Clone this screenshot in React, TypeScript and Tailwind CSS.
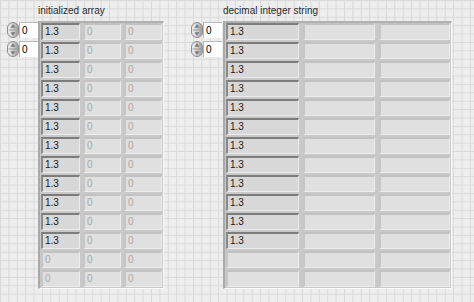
import React from 'react';

const ROWS = 14;
const FILLED = 12;

function Spinner() {
  return (
    <svg width="12" height="16" viewBox="0 0 12 16" className="shrink-0">
      <defs>
        <linearGradient id="spg" x1="0" y1="0" x2="1" y2="0">
          <stop offset="0" stopColor="#f4f4f4" />
          <stop offset="0.5" stopColor="#cfcfcf" />
          <stop offset="1" stopColor="#9a9a9a" />
        </linearGradient>
      </defs>
      <rect x="0.5" y="0.5" width="11" height="15" rx="5.5" fill="url(#spg)" stroke="#8c8c8c" />
      <line x1="1.5" y1="8" x2="10.5" y2="8" stroke="#9a9a9a" />
      <path d="M6 2.2 L8.5 5.8 L3.5 5.8 Z" fill="#7a7a7a" />
      <path d="M6 13.8 L8.5 10.2 L3.5 10.2 Z" fill="#7a7a7a" />
    </svg>
  );
}

function IndexControl({ boxW }: { boxW: string }) {
  return (
    <div className="flex items-center h-[16px]">
      <Spinner />
      <div className={`${boxW} h-[16px] bg-white border-t border-l border-[#b8b8b8] text-[10px] leading-[15px] pl-[2px] text-black`}>0</div>
    </div>
  );
}

function Cell({ active, text, w }: { active: boolean; text: string; w: string }) {
  return (
    <div
      className={
        active
          ? `${w} h-[17px] bg-[#d8d8d8] border-t-2 border-l-2 border-b border-r border-t-[#7c7c7c] border-l-[#8a8a8a] border-b-[#ececec] border-r-[#ececec] text-[10px] leading-[14px] pl-[2px] text-[#1a1a1a]`
          : `${w} h-[17px] bg-[#e0e0e0] border-t-2 border-l-2 border-b border-r border-t-[#c2c2c2] border-l-[#c6c6c6] border-b-[#ededed] border-r-[#ededed] text-[10px] leading-[14px] pl-[2px] text-[#a8a8a8]`
      }
    >
      {text}
    </div>
  );
}

function ArrayBlock({
  label,
  widths,
  numeric,
  idxW,
  boxW,
  gapX,
}: {
  label: string;
  widths: string[];
  numeric: boolean;
  idxW: string;
  boxW: string;
  gapX: string;
}) {
  return (
    <div className="flex flex-col">
      <div className="flex h-[20px] text-[10px] leading-[20px] text-[#2a2a2a] whitespace-nowrap">
        <div className={idxW} />
        <span>{label}</span>
      </div>
      <div className="flex">
        <div className={`${idxW} flex flex-col gap-[3px] pt-[1px]`}>
          <IndexControl boxW={boxW} />
          <IndexControl boxW={boxW} />
        </div>
        <div className="bg-[#c9c9c9] border-l-2 border-t-2 border-r border-b border-l-[#a9a9a9] border-t-[#b0b0b0] border-r-[#fafafa] border-b-[#fafafa] pl-[1px] pr-[1px] pb-[1px]">
          <div className="flex flex-col gap-[2px]">
            {Array.from({ length: ROWS }).map((_, r) => (
              <div key={r} className={`flex ${gapX}`}>
                {widths.map((w, c) => {
                  const active = c === 0 && r < FILLED;
                  const text = active ? '1.3' : numeric ? '0' : '';
                  return <Cell key={c} active={active} text={text} w={w} />;
                })}
              </div>
            ))}
          </div>
        </div>
      </div>
    </div>
  );
}

export default function App() {
  return (
    <div
      className="w-[474px] h-[302px] overflow-hidden bg-[#eeeeee] bg-[linear-gradient(to_right,#d9d9d9_1px,transparent_1px),linear-gradient(to_bottom,#d9d9d9_1px,transparent_1px)] bg-[size:8.4px_8.4px] flex pt-[1px] pl-[7px] gap-[27px]"
      style={{ fontFamily: '"Liberation Sans", Arial, sans-serif' }}
    >
      <ArrayBlock
        label="initialized array"
        widths={['w-[39px]', 'w-[38px]', 'w-[38px]']}
        numeric={true}
        idxW="w-[31px]"
        boxW="w-[19px]"
        gapX="gap-[3px]"
      />
      <ArrayBlock
        label="decimal integer string"
        widths={['w-[73px]', 'w-[72px]', 'w-[71px]']}
        numeric={false}
        idxW="w-[32px]"
        boxW="w-[19px]"
        gapX="gap-[4px]"
      />
    </div>
  );
}
